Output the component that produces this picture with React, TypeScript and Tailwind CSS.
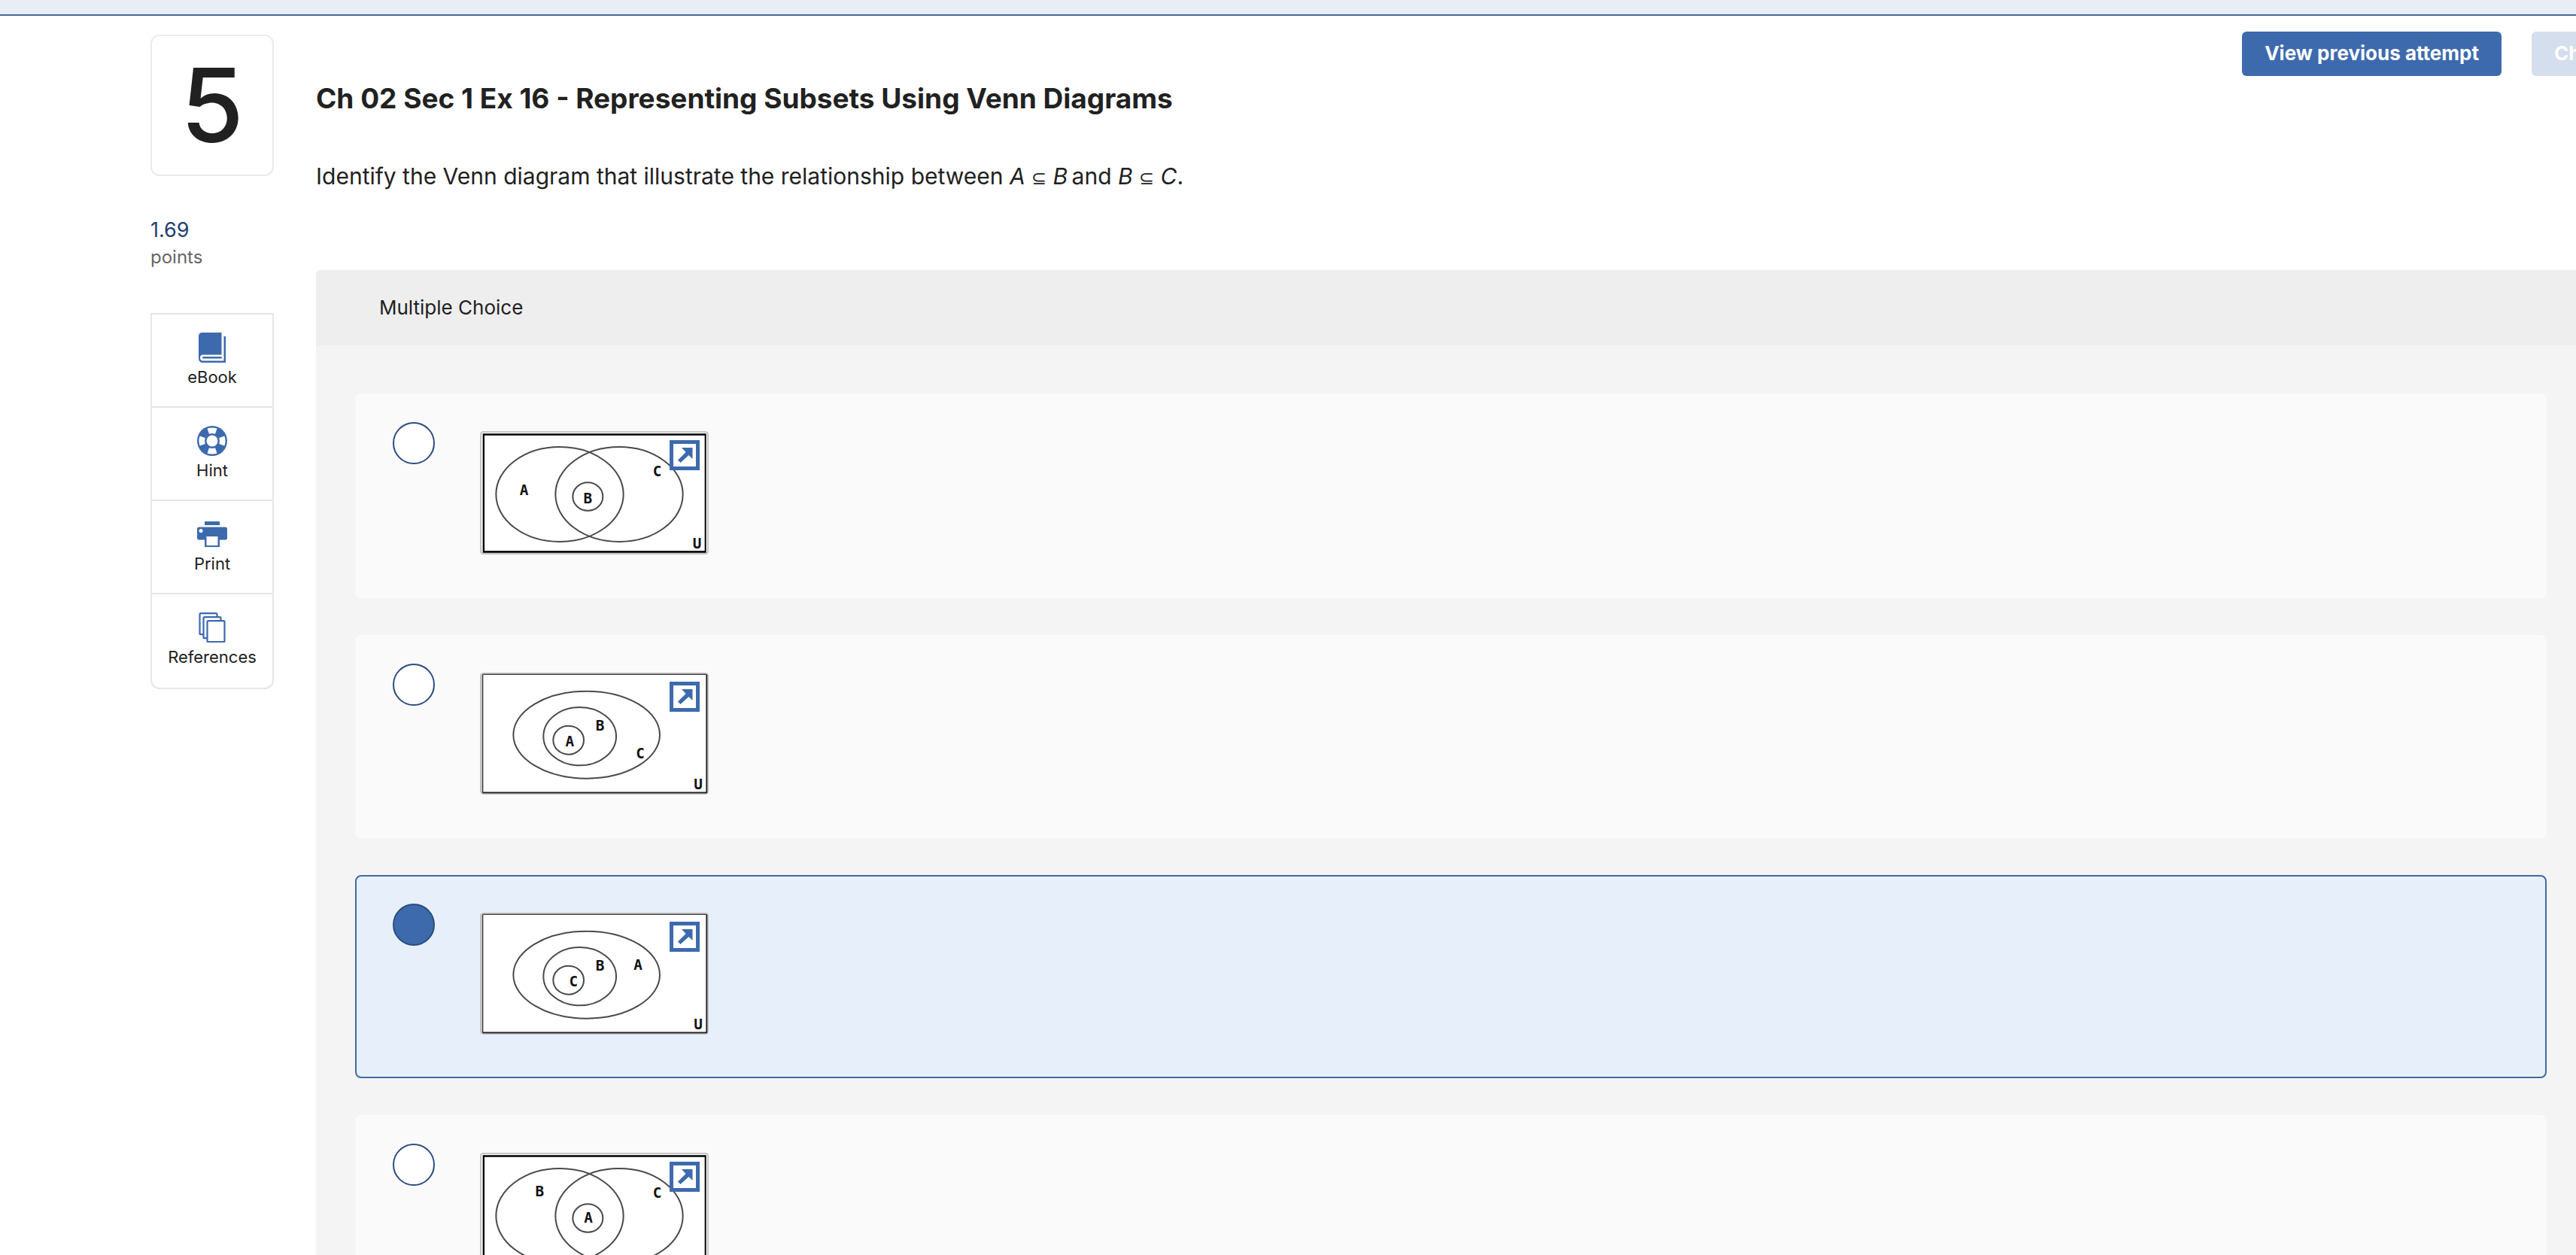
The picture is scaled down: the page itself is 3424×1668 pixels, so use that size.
import { useState } from 'react'
import type { ReactNode } from 'react'

type Ellipse = [cx: number, cy: number, rx: number, ry: number]
type Letter = [char: string, x: number, y: number]

interface Choice {
  id: string
  label: string
  framed: boolean
  ellipses: Ellipse[]
  letters: Letter[]
}

const overlapping: Ellipse[] = [
  [318, 252, 254, 189],
  [555, 252, 254, 189],
  [430, 261, 60, 56],
]

const nested: Ellipse[] = [
  [425, 248, 292, 174],
  [398, 254, 145, 116],
  [353, 269, 61, 57],
]

const choices: Choice[] = [
  {
    id: 'choice-1',
    label: 'A and C overlap, B lies in both',
    framed: true,
    ellipses: overlapping,
    letters: [['A', 176, 233], ['B', 430, 266], ['C', 707, 158], ['U', 866, 448]],
  },
  {
    id: 'choice-2',
    label: 'A inside B inside C',
    framed: false,
    ellipses: nested,
    letters: [['A', 358, 274], ['B', 479, 209], ['C', 639, 320], ['U', 870, 445]],
  },
  {
    id: 'choice-3',
    label: 'C inside B inside A',
    framed: false,
    ellipses: nested,
    letters: [['C', 373, 274], ['B', 479, 210], ['A', 630, 207], ['U', 870, 445]],
  },
  {
    id: 'choice-4',
    label: 'B and C overlap, A lies in both',
    framed: true,
    ellipses: overlapping,
    letters: [['B', 238, 152], ['A', 432, 259], ['C', 707, 158], ['U', 866, 448]],
  },
]

const BookIcon = () => (
  <svg viewBox="0 0 40 40" className="size-[40px]" fill="#3d6aad">
    <path d="M7 0H32.500V29.500H8A3 3 0 0 0 8 37.500H35.500V5H38V40H8Q2 40 2 34V5Q2 0 7 0Z" />
    <rect x="7" y="32" width="26" height="2.600" rx="1.300" />
  </svg>
)

const HintIcon = () => (
  <svg viewBox="0 0 40 40" className="size-[40px]">
    <circle cx="20" cy="20" r="20" fill="#3d6aad" />
    <g fill="#fff">
      {[0, 90, 180, 270].map((angle) => (
        <path key={angle} d="M13.500 3.600Q20 1.300 26.500 3.600L24 10.700Q20 9.400 16 10.700Z" transform={`rotate(${angle} 20 20)`} />
      ))}
      <circle cx="20" cy="20" r="7.500" />
    </g>
  </svg>
)

const PrintIcon = () => (
  <svg viewBox="0 0 40 40" className="size-[40px]" fill="#3d6aad">
    <rect x="10" y="3" width="20" height="5" />
    <path d="M2.500 10.500H37.500Q40 10.500 40 13V25Q40 27.500 37.500 27.500H30V37H10V27.500H2.500Q0 27.500 0 25V13Q0 10.500 2.500 10.500Z" />
    <circle cx="5" cy="15.500" r="2.500" fill="#fff" />
    <rect x="12.500" y="23" width="15" height="12" fill="#fff" />
  </svg>
)

const ReferencesIcon = () => (
  <svg viewBox="0 0 40 40" className="size-[40px]" fill="#fff" stroke="#3d6aad" strokeWidth="2.200">
    <rect x="3.500" y="1.200" width="23" height="28" rx="1.500" />
    <rect x="8.500" y="6.200" width="23" height="28" rx="1.500" />
    <rect x="13.500" y="11.200" width="23" height="28" rx="1.500" />
  </svg>
)

const tools: { name: string; icon: ReactNode }[] = [
  { name: 'eBook', icon: <BookIcon /> },
  { name: 'Hint', icon: <HintIcon /> },
  { name: 'Print', icon: <PrintIcon /> },
  { name: 'References', icon: <ReferencesIcon /> },
]

const VennDiagram = ({ choice }: { choice: Choice }) => (
  <svg
    viewBox={choice.framed ? '0 0 912 492' : '0 0 912 486'}
    className="w-[304px]"
    role="img"
    aria-label={choice.label}
  >
    {choice.framed ? (
      <>
        <rect x="3" y="3" width="906" height="486" rx="10" fill="#fff" stroke="#c6c6c6" strokeWidth="6" />
        <path d="M11 10H902V485H11ZM18 17V477H896V17Z" fill="#000" fillRule="evenodd" />
      </>
    ) : (
      <>
        <rect width="912" height="486" rx="14" fill="#c2c2c2" />
        <rect x="11" y="7" width="893" height="472" rx="3" fill="#fff" stroke="#3a3a3a" strokeWidth="4" />
        <path d="M11 478H904V8" fill="none" stroke="#222" strokeWidth="5" />
      </>
    )}
    <g fill="none" stroke="#4a4a4a" strokeWidth="6">
      {choice.ellipses.map(([cx, cy, rx, ry]) => (
        <ellipse key={cx} cx={cx} cy={cy} rx={rx} ry={ry} />
      ))}
    </g>
    {choice.letters.map(([char, x, y]) => (
      <text
        key={char}
        x={x}
        y={y + 21}
        textAnchor="middle"
        fill="#111"
        className="font-['DejaVu_Sans_Mono',monospace] text-[58px] font-bold"
      >
        {char}
      </text>
    ))}
  </svg>
)

const Sidebar = () => (
  <aside className="w-[164px] shrink-0">
    <div className="flex h-[188px] items-center justify-center rounded-xl border-2 border-[#eaeaea] text-[136px] leading-none font-medium">
      5
    </div>
    <div className="mt-[54px] text-[27px] leading-[36px] text-[#1f3d72]">1.69</div>
    <div className="text-[24px] leading-[36px] text-[#666666]">points</div>
    <div className="mt-14 divide-y-2 divide-[#e6e6e6] rounded-b-xl border-2 border-[#e6e6e6]">
      {tools.map(({ name, icon }) => (
        <button key={name} type="button" className="flex h-[124px] w-full flex-col items-center pt-6 text-[22px] leading-[38px]">
          {icon}
          {name}
        </button>
      ))}
    </div>
  </aside>
)

const ChoiceRow = ({ choice, checked, onSelect }: { choice: Choice; checked: boolean; onSelect: () => void }) => (
  <div
    className={`flex items-start rounded-lg border-2 pt-9 pb-14 pl-12 ${
      checked ? 'border-[#426a9f] bg-[#e7f0fa]' : 'border-[#fafafa] bg-[#fafafa]'
    }`}
  >
    <input
      type="radio"
      name="answer"
      id={choice.id}
      checked={checked}
      onChange={onSelect}
      className="size-14 shrink-0 appearance-none rounded-full border-2 border-[#2b4c7e] bg-white checked:bg-[#3d6aad]"
    />
    <div className="relative mt-3 ml-[60px]">
      <label htmlFor={choice.id} className="block">
        <VennDiagram choice={choice} />
      </label>
      <button
        type="button"
        aria-label="Enlarge diagram"
        className="absolute top-3 right-3 size-10 border-5 border-[#3d6aad] bg-white"
      >
        <svg viewBox="0 0 30 30" className="size-full" fill="#3d6aad">
          <path d="M11 5H25.500V20L20.500 15L9.500 25L6 21.500L16.500 11Z" />
        </svg>
      </button>
    </div>
  </div>
)

export default function App() {
  const [answer, setAnswer] = useState('choice-3')

  return (
    <div className="h-screen overflow-hidden bg-white font-[Inter,sans-serif] text-[#212121]">
      <div className="h-[21px] border-b-2 border-[#4a6a9c] bg-[#e7eef6]" />

      <div className="flex gap-14 pt-[25px] pl-[200px]">
        <Sidebar />

        <main className="min-w-0 flex-1">
          {/* Question header */}
          <div className="-mt-1 flex h-[317px] items-start">
            <div className="min-w-0 flex-1 pt-16">
              <h1 className="text-[37px] leading-[50px] font-bold">
                Ch 02 Sec 1 Ex 16 - Representing Subsets Using Venn Diagrams
              </h1>
              <p className="mt-[58px] text-[30px] leading-[40px]">
                Identify the Venn diagram that illustrate the relationship between <i>A</i>{' '}
                <span className="text-[24px]">⊆</span> <i>B</i>&thinsp;and <i>B</i>{' '}
                <span className="text-[24px]">⊆</span> <i>C</i>.
              </p>
            </div>
            <div className="-mr-[200px] flex shrink-0 gap-10 text-[26px] leading-[57px] font-bold text-white">
              <button type="button" className="h-[59px] rounded-md bg-[#3d6aad] px-[30px] pb-[2px]">
                View previous attempt
              </button>
              <button type="button" disabled className="w-[259px] rounded-md bg-[#d4deed] px-[30px] pb-[2px] text-left whitespace-nowrap">
                Check my work
              </button>
            </div>
          </div>

          {/* Answer choices */}
          <fieldset className="rounded-tl-md bg-[#f4f4f4]">
            <legend className="float-left h-[100px] w-full rounded-tl-md bg-[#eeeeee] pl-[84px] text-[26px] leading-[100px]">
              Multiple Choice
            </legend>
            <div className="clear-both flex flex-col gap-[49px] pt-16 pr-[39px] pb-16 pl-[52px]">
              {choices.map((choice) => (
                <ChoiceRow
                  key={choice.id}
                  choice={choice}
                  checked={answer === choice.id}
                  onSelect={() => setAnswer(choice.id)}
                />
              ))}
            </div>
          </fieldset>
        </main>
      </div>
    </div>
  )
}
